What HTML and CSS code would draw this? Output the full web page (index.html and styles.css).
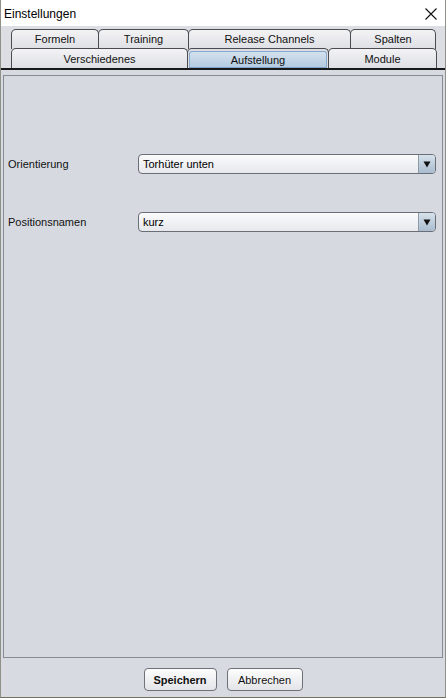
FILE: index.html
```html
<!DOCTYPE html>
<html>
<head>
<meta charset="utf-8">
<link rel="stylesheet" href="styles.css">
</head>
<body>
<div class="window">
  <div class="titlebar">
    <span class="title">Einstellungen</span>
    <svg class="close" width="12" height="12" viewBox="0 0 12 12"><path d="M0.5 0.5 L11.5 11.5 M11.5 0.5 L0.5 11.5" stroke="#111" stroke-width="1.1" fill="none"/></svg>
  </div>
  <div class="tabs">
    <div class="tabrow row1">
      <div class="tab w-formeln">Formeln</div>
      <div class="tab w-training">Training</div>
      <div class="tab w-release">Release Channels</div>
      <div class="tab w-spalten">Spalten</div>
    </div>
    <div class="tabrow row2">
      <div class="tab w-versch">Verschiedenes</div>
      <div class="tab w-aufst selected"><span>Aufstellung</span></div>
      <div class="tab w-module">Module</div>
    </div>
  </div>
  <div class="tabline"></div>
  <div class="panel">
    <div class="form">
      <label class="lbl">Orientierung</label>
      <div class="combo"><span class="value">Torhüter unten</span><span class="arrow"><svg width="8" height="7" viewBox="0 0 8 7"><path d="M0.5 0.5 H7.5 L4 6.5 Z" fill="#111"/></svg></span></div>
      <label class="lbl">Positionsnamen</label>
      <div class="combo"><span class="value">kurz</span><span class="arrow"><svg width="8" height="7" viewBox="0 0 8 7"><path d="M0.5 0.5 H7.5 L4 6.5 Z" fill="#111"/></svg></span></div>
    </div>
  </div>
  <div class="footer">
    <button class="btn primary w-save">Speichern</button>
    <button class="btn w-cancel">Abbrechen</button>
  </div>
</div>
</body>
</html>
```
FILE: styles.css
```css
* { box-sizing: border-box; }
html, body { margin: 0; padding: 0; }
body {
  width: 446px;
  height: 698px;
  overflow: hidden;
  font-family: "Liberation Sans", Arial, sans-serif;
  font-size: 11px;
  color: #000;
}
.window {
  width: 446px;
  height: 698px;
  display: flex;
  flex-direction: column;
  background: #d7dae1;
  border-left: 1px solid #8f9088;
  border-right: 1px solid #8f9088;
  border-bottom: 1px solid #6f705f;
}
.titlebar {
  height: 26px;
  background: #fff;
  display: flex;
  align-items: center;
  justify-content: space-between;
  padding: 1px 8px 0 3px;
  flex: none;
}
.title {
  font-size: 12px;
  color: #000;
}
.close { display: block; }
.tabs {
  padding: 3px 0 0 10px;
  background: #dcdee3;
  flex: none;
}
.tabrow { display: flex; }
.tab {
  border: 1px solid #4a4c50;
  border-bottom: none;
  border-radius: 5px 5px 0 0;
  background: linear-gradient(#f3f3f5, #dedfe4);
  display: flex;
  align-items: center;
  justify-content: center;
  color: #111;
  margin-left: -1px;
}
.tab:first-child { margin-left: 0; }
.row1 .tab { height: 20px; padding-bottom: 1px; }
.row2 { margin-top: -1px; position: relative; }
.row2 .tab { height: 20px; }
.w-formeln { width: 88px; }
.w-training { width: 91px; }
.w-release { width: 163px; }
.w-spalten { width: 86px; }
.w-versch { width: 177px; }
.w-aufst { width: 142px; }
.w-module { width: 109px; }
.tab.selected {
  padding: 2px 1px 0 1px;
  background: #dcdee3;
}
.tab.selected span {
  display: flex;
  align-items: center;
  justify-content: center;
  width: 100%;
  height: 100%;
  border: 1px solid #86a9cc;
  border-bottom: 1px solid #7fa3c7;
  border-radius: 3px 3px 0 0;
  background: linear-gradient(#d3e1ee, #b5cbe0);
}
.tabline {
  height: 2px;
  background: #17181a;
  flex: none;
}
.panel {
  flex: 1;
  margin: 5px 2px 0 2px;
  border: 1px solid #878b92;
  background: #d6d9e0;
}
.form {
  display: grid;
  grid-template-columns: 130px 298px;
  grid-row-gap: 38px;
  align-items: center;
  padding: 78px 0 0 4px;
}
.lbl { color: #111; }
.combo {
  height: 20px;
  border: 1px solid #6a6e76;
  border-radius: 4px;
  background: linear-gradient(#fbfbfc, #e6e8ec);
  display: flex;
  align-items: center;
  overflow: hidden;
}
.combo .value {
  flex: 1;
  padding-left: 4px;
}
.combo .arrow {
  width: 17px;
  height: 100%;
  border-left: 1px solid #8d9aa8;
  background: linear-gradient(#d6e1eb, #a9bccf);
  display: flex;
  align-items: center;
  justify-content: center;
}
.combo .arrow svg { display: block; }
.footer {
  height: 39px;
  flex: none;
  display: flex;
  justify-content: center;
  align-items: flex-start;
  gap: 10px;
  padding-top: 10px;
}
.btn {
  height: 23px;
  border: 1px solid #6e7177;
  border-radius: 4px;
  background: linear-gradient(#fdfdfd, #e3e4e8);
  font-family: "Liberation Sans", Arial, sans-serif;
  font-size: 11px;
  color: #111;
  padding: 0;
}
.btn.primary { font-weight: bold; }
.w-save { width: 73px; }
.w-cancel { width: 76px; }
```
